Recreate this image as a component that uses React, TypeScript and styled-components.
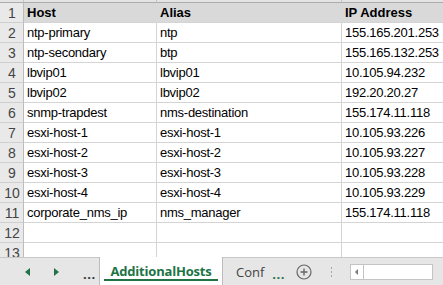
import React from "react";
import styled, { createGlobalStyle } from "styled-components";

const GlobalStyle = createGlobalStyle`
  html, body {
    margin: 0;
    padding: 0;
    overflow: hidden;
    background: #ffffff;
  }
`;

const FONT = `"Liberation Sans", Arial, sans-serif`;
const GREEN = "#217346";

type HostRow = { host: string; alias: string; ip: string };

const rows: HostRow[] = [
  { host: "ntp-primary", alias: "ntp", ip: "155.165.201.253" },
  { host: "ntp-secondary", alias: "btp", ip: "155.165.132.253" },
  { host: "lbvip01", alias: "lbvip01", ip: "10.105.94.232" },
  { host: "lbvip02", alias: "lbvip02", ip: "192.20.20.27" },
  { host: "snmp-trapdest", alias: "nms-destination", ip: "155.174.11.118" },
  { host: "esxi-host-1", alias: "esxi-host-1", ip: "10.105.93.226" },
  { host: "esxi-host-2", alias: "esxi-host-2", ip: "10.105.93.227" },
  { host: "esxi-host-3", alias: "esxi-host-3", ip: "10.105.93.228" },
  { host: "esxi-host-4", alias: "esxi-host-4", ip: "10.105.93.229" },
  { host: "corporate_nms_ip", alias: "nms_manager", ip: "155.174.11.118" },
];

const Sheet = styled.div`
  width: 443px;
  height: 285px;
  display: flex;
  flex-direction: column;
  overflow: hidden;
  font-family: ${FONT};
`;

const Grid = styled.div`
  height: 257px;
  overflow: hidden;
  display: grid;
  grid-template-columns: 24px 133px 185px 110px;
  grid-auto-rows: 20px;
  grid-template-rows: 3px;
`;

const ColHead = styled.div`
  background: #e4e4e4;
  border-right: 1px solid #c4c4c4;
  border-bottom: 1px solid #ababab;
`;

const RowHead = styled.div`
  background: #e9e9e9;
  border-right: 1px solid #bcbcbc;
  border-bottom: 1px solid #cfcfcf;
  color: #444444;
  font-size: 14px;
  display: flex;
  align-items: center;
  justify-content: center;
  padding-left: 1px;
`;

const Cell = styled.div<{ $header?: boolean }>`
  background: ${(p) => (p.$header ? "#d9d9d9" : "#ffffff")};
  border-right: 1px solid ${(p) => (p.$header ? "#d9d9d9" : "#d4d4d4")};
  border-bottom: 1px solid #d4d4d4;
  color: #000000;
  font-size: 13px;
  letter-spacing: ${(p) => (p.$header ? "0" : "-0.25px")};
  font-weight: ${(p) => (p.$header ? 700 : 400)};
  display: flex;
  align-items: center;
  padding-left: 3px;
  white-space: nowrap;
  overflow: hidden;
`;

const TabBar = styled.div`
  height: 28px;
  box-sizing: border-box;
  background: #e6e6e6;
  border-top: 1px solid #c8c8c8;
  display: flex;
  align-items: stretch;
  font-family: "Open Sans", ${FONT};
`;

const Nav = styled.div`
  width: 99px;
  display: flex;
  align-items: center;
  padding-left: 25px;
  box-sizing: border-box;
`;

const NavArrow = styled.span<{ $dir: "left" | "right" }>`
  width: 0;
  height: 0;
  border-top: 4px solid transparent;
  border-bottom: 4px solid transparent;
  ${(p) =>
    p.$dir === "left"
      ? `border-right: 5px solid ${GREEN};`
      : `border-left: 5px solid ${GREEN};`}
  margin-right: 24px;
`;

const Dots = styled.span<{ $color?: string }>`
  color: ${(p) => p.$color ?? GREEN};
  font-size: 13px;
  font-weight: 700;
  letter-spacing: 0.5px;
  padding-top: 4px;
`;

const ActiveTab = styled.div`
  width: 124px;
  margin-top: -1px;
  background: #ffffff;
  border-left: 1px solid #bdbdbd;
  border-right: 1px solid #bdbdbd;
  box-sizing: border-box;
  display: flex;
  align-items: center;
  justify-content: center;
  color: ${GREEN};
  font-weight: 700;
  font-size: 13px;
  letter-spacing: -0.2px;
  position: relative;
`;

const TabUnderline = styled.span`
  position: absolute;
  left: 4px;
  right: 4px;
  bottom: 4px;
  height: 2px;
  background: ${GREEN};
`;

const Tab = styled.div`
  display: flex;
  align-items: center;
  padding-left: 13px;
  color: #444444;
  font-size: 13px;
  gap: 8px;
`;

const AddButton = styled.span`
  margin-left: 11px;
  display: flex;
  align-items: center;
`;

const Separator = styled.span`
  margin-left: 19px;
  display: flex;
  flex-direction: column;
  justify-content: center;
  gap: 2px;
  & > i {
    display: block;
    width: 1px;
    height: 2px;
    background: #a8a8a8;
  }
`;

const Scroll = styled.div`
  margin-left: 18px;
  align-self: center;
  width: 83px;
  height: 16px;
  box-sizing: border-box;
  background: #ffffff;
  border: 1px solid #c4c4c4;
  display: flex;
`;

const ScrollBtn = styled.span`
  width: 12px;
  border-right: 1px solid #c4c4c4;
  display: flex;
  align-items: center;
  justify-content: center;
  &::before {
    content: "";
    border-top: 3px solid transparent;
    border-bottom: 3px solid transparent;
    border-right: 3px solid #777777;
  }
`;

export default function App() {
  return (
    <Sheet>
      <GlobalStyle />
      <Grid>
        <ColHead />
        <ColHead />
        <ColHead />
        <ColHead />
        <RowHead>1</RowHead>
        <Cell $header>Host</Cell>
        <Cell $header>Alias</Cell>
        <Cell $header>IP Address</Cell>
        {rows.map((r, i) => (
          <React.Fragment key={r.host}>
            <RowHead>{i + 2}</RowHead>
            <Cell>{r.host}</Cell>
            <Cell>{r.alias}</Cell>
            <Cell>{r.ip}</Cell>
          </React.Fragment>
        ))}
        {[12, 13].map((n) => (
          <React.Fragment key={n}>
            <RowHead>{n}</RowHead>
            <Cell />
            <Cell />
            <Cell />
          </React.Fragment>
        ))}
      </Grid>
      <TabBar>
        <Nav>
          <NavArrow $dir="left" />
          <NavArrow $dir="right" />
          <Dots $color="#333333">...</Dots>
        </Nav>
        <ActiveTab>
          AdditionalHosts
          <TabUnderline />
        </ActiveTab>
        <Tab>
          Conf
          <Dots>...</Dots>
        </Tab>
        <AddButton>
          <svg width="16" height="16" viewBox="0 0 16 16">
            <circle cx="8" cy="8" r="7" fill="none" stroke="#666" strokeWidth="1.2" />
            <path d="M8 4.5v7M4.5 8h7" stroke="#666" strokeWidth="1.4" />
          </svg>
        </AddButton>
        <Separator>
          <i />
          <i />
          <i />
        </Separator>
        <Scroll>
          <ScrollBtn />
        </Scroll>
      </TabBar>
    </Sheet>
  );
}
